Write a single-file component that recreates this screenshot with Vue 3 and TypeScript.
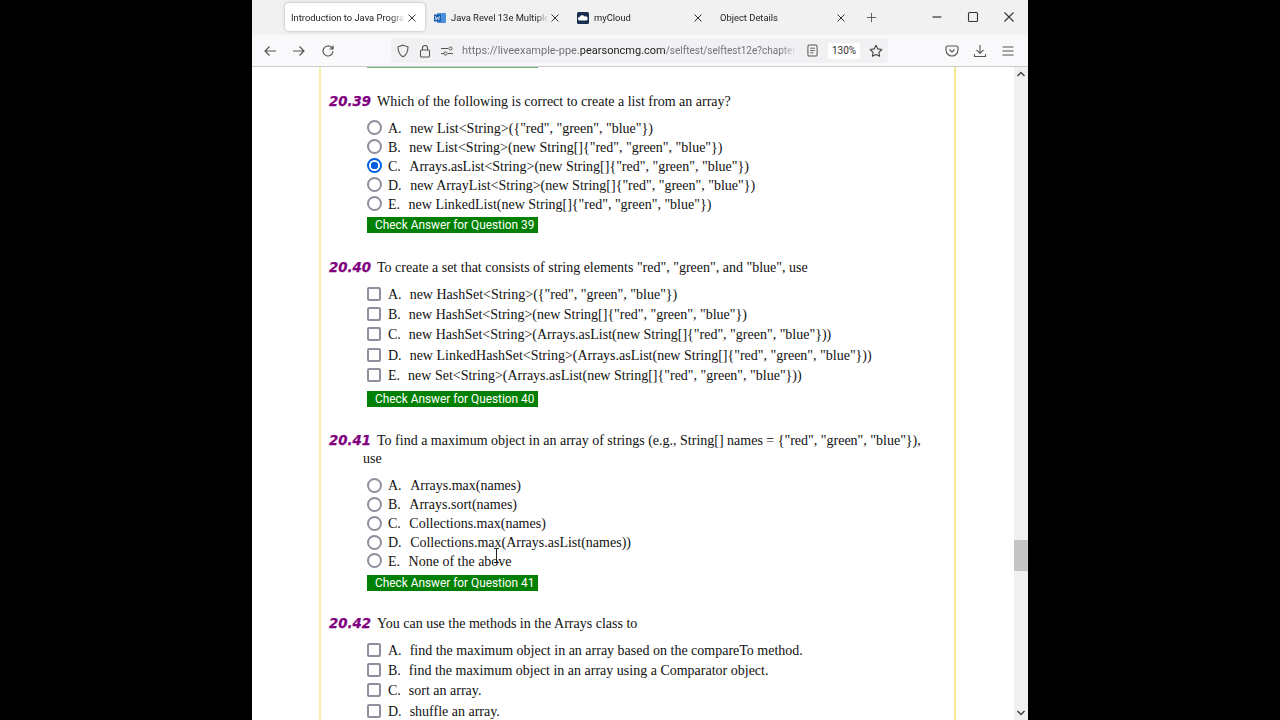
<script setup lang="ts">
interface Option {
  key: string
  text: string
  checked?: boolean
}

interface Question {
  num: string
  text: string
  type: 'radio' | 'check'
  options: Option[]
  button?: string
}

const tabs = [
  { title: 'Introduction to Java Programming', active: true, icon: '' },
  { title: 'Java Revel 13e Multiple Choice', active: false, icon: 'word' },
  { title: 'myCloud', active: false, icon: 'cloud' },
  { title: 'Object Details', active: false, icon: '' }
]

const questions: Question[] = [
  {
    num: '20.39',
    text: 'Which of the following is correct to create a list from an array?',
    type: 'radio',
    button: 'Check Answer for Question 39',
    options: [
      { key: 'A.', text: 'new List<String>({"red", "green", "blue"})' },
      { key: 'B.', text: 'new List<String>(new String[]{"red", "green", "blue"})' },
      { key: 'C.', text: 'Arrays.asList<String>(new String[]{"red", "green", "blue"})', checked: true },
      { key: 'D.', text: 'new ArrayList<String>(new String[]{"red", "green", "blue"})' },
      { key: 'E.', text: 'new LinkedList(new String[]{"red", "green", "blue"})' }
    ]
  },
  {
    num: '20.40',
    text: 'To create a set that consists of string elements "red", "green", and "blue", use',
    type: 'check',
    button: 'Check Answer for Question 40',
    options: [
      { key: 'A.', text: 'new HashSet<String>({"red", "green", "blue"})' },
      { key: 'B.', text: 'new HashSet<String>(new String[]{"red", "green", "blue"})' },
      { key: 'C.', text: 'new HashSet<String>(Arrays.asList(new String[]{"red", "green", "blue"}))' },
      { key: 'D.', text: 'new LinkedHashSet<String>(Arrays.asList(new String[]{"red", "green", "blue"}))' },
      { key: 'E.', text: 'new Set<String>(Arrays.asList(new String[]{"red", "green", "blue"}))' }
    ]
  },
  {
    num: '20.41',
    text: 'To find a maximum object in an array of strings (e.g., String[] names = {"red", "green", "blue"}), use',
    type: 'radio',
    button: 'Check Answer for Question 41',
    options: [
      { key: 'A.', text: 'Arrays.max(names)' },
      { key: 'B.', text: 'Arrays.sort(names)' },
      { key: 'C.', text: 'Collections.max(names)' },
      { key: 'D.', text: 'Collections.max(Arrays.asList(names))' },
      { key: 'E.', text: 'None of the above' }
    ]
  },
  {
    num: '20.42',
    text: 'You can use the methods in the Arrays class to',
    type: 'check',
    options: [
      { key: 'A.', text: 'find the maximum object in an array based on the compareTo method.' },
      { key: 'B.', text: 'find the maximum object in an array using a Comparator object.' },
      { key: 'C.', text: 'sort an array.' },
      { key: 'D.', text: 'shuffle an array.' }
    ]
  }
]
</script>

<template>
  <div class="screen">
    <div class="window">
      <div class="tabstrip">
        <div v-for="tab in tabs" :key="tab.title" :class="['tab', { 'tab--active': tab.active }]">
          <svg v-if="tab.icon === 'word'" class="tab__icon" viewBox="0 0 12 12">
            <rect x="3" y="1" width="9" height="10" rx="1" fill="#4a8fdc" />
            <rect x="0" y="2.5" width="7" height="7" fill="#1c5cb0" />
            <path d="M1.2 4l.8 4 1.3-3 1.3 3 .8-4" fill="none" stroke="#fff" stroke-width=".7" />
          </svg>
          <svg v-if="tab.icon === 'cloud'" class="tab__icon" viewBox="0 0 12 12">
            <rect width="12" height="12" rx="1.5" fill="#17304f" />
            <path d="M2.5 8.5a1.7 1.7 0 0 1 .2-3.4 2.6 2.6 0 0 1 4.8-.6 2.1 2.1 0 0 1 2 4z" fill="#fff" />
          </svg>
          <span class="tab__title">{{ tab.title }}</span>
          <svg class="tab__close" viewBox="0 0 10 10">
            <path d="M1.5 1.5l7 7M8.5 1.5l-7 7" stroke="#333" stroke-width="1" fill="none" />
          </svg>
        </div>
        <svg class="tabstrip__plus" viewBox="0 0 12 12">
          <path d="M6 1v10M1 6h10" stroke="#555" stroke-width="1" fill="none" />
        </svg>
        <div class="winctl">
          <svg viewBox="0 0 12 12"><path d="M1.5 6h9" stroke="#333" stroke-width="1.2" fill="none" /></svg>
          <svg viewBox="0 0 12 12"><rect x="1.5" y="1.5" width="9" height="9" rx="1" stroke="#333" stroke-width="1.1" fill="none" /></svg>
          <svg viewBox="0 0 12 12"><path d="M1.5 1.5l9 9M10.5 1.5l-9 9" stroke="#333" stroke-width="1.1" fill="none" /></svg>
        </div>
      </div>

      <div class="toolbar">
        <div class="nav">
          <svg viewBox="0 0 14 14"><path d="M13 7H2M6.5 2.5L2 7l4.5 4.5" stroke="#555" stroke-width="1.2" fill="none" /></svg>
          <svg viewBox="0 0 14 14"><path d="M1 7h11M7.5 2.5L12 7l-4.5 4.500" stroke="#555" stroke-width="1.2" fill="none" /></svg>
          <svg viewBox="0 0 14 14"><path d="M12 7.2A5 5 0 1 1 10.4 3.3L12 5M12 1.5V5H8.5" stroke="#555" stroke-width="1.2" fill="none" /></svg>
        </div>
        <div class="urlbar">
          <svg class="urlbar__icon" viewBox="0 0 14 14"><path d="M7 1.2l5 1.6c0 5-1.4 8.2-5 10-3.6-1.8-5-5-5-10z" stroke="#555" stroke-width="1.1" fill="none" /></svg>
          <svg class="urlbar__icon" viewBox="0 0 14 14"><rect x="2.5" y="6" width="9" height="7" rx="1" stroke="#555" stroke-width="1.1" fill="none" /><path d="M4.5 6V4a2.5 2.5 0 0 1 5 0v2" stroke="#555" stroke-width="1.1" fill="none" /></svg>
          <svg class="urlbar__icon" viewBox="0 0 14 14"><path d="M1 4.5h7M1 9.5h3M8 9.5h5" stroke="#555" stroke-width="1" fill="none" /><circle cx="10.5" cy="4.5" r="1.6" stroke="#555" fill="none" /><circle cx="5.5" cy="9.5" r="1.6" stroke="#555" fill="none" /></svg>
          <span class="url">https://liveexample-ppe.<b>pearsoncmg.com</b><span class="url__path">/selftest/selftest12e?chapter</span></span>
          <svg class="urlbar__reader" viewBox="0 0 12 14"><rect x="1" y="1" width="10" height="12" rx="1.5" stroke="#555" stroke-width="1.1" fill="none" /><path d="M3.5 4.5h5M3.5 7h5M3.5 9.5h3.5" stroke="#555" fill="none" /></svg>
          <span class="urlbar__zoom">130%</span>
          <svg class="urlbar__star" viewBox="0 0 14 14"><path d="M7 1.2l1.8 3.7 4 .6-2.9 2.8.7 4L7 10.4l-3.6 1.9.7-4-2.9-2.8 4-.6z" stroke="#444" stroke-width="1.1" fill="none" stroke-linejoin="round" /></svg>
        </div>
        <div class="tools">
          <svg viewBox="0 0 14 14"><path d="M2.5 2h9A1.5 1.5 0 0 1 13 3.500V6a6 6 0 0 1-12 0V3.500A1.500 1.500 0 0 1 2.500 2z" stroke="#555" stroke-width="1.1" fill="none" /><path d="M4.500 5.500L7 8l2.500-2.500" stroke="#555" stroke-width="1.1" fill="none" /></svg>
          <svg viewBox="0 0 14 14"><path d="M7 1v8M3.500 5.800L7 9.300l3.500-3.500M1.500 10v2.500h11V10" stroke="#555" stroke-width="1.1" fill="none" /></svg>
          <svg viewBox="0 0 14 14"><path d="M1.500 3h11M1.500 7h11M1.500 11h11" stroke="#555" stroke-width="1.1" fill="none" /></svg>
        </div>
      </div>

      <div class="viewport">
        <div class="page">
          <div class="panel">
            <div class="prev-button"></div>
            <section v-for="q in questions" :key="q.num" class="question">
              <p class="question__head"><span class="question__num">{{ q.num }}</span>{{ q.text }}</p>
              <ul :class="['options', `options--${q.type}`]">
                <li v-for="opt in q.options" :key="opt.key" class="option">
                  <span v-if="q.type === 'radio'" :class="['radio', { 'radio--on': opt.checked }]"></span>
                  <span v-else class="checkbox"></span>
                  <span class="option__key">{{ opt.key }}</span>
                  <span class="option__text">{{ opt.text }}</span>
                </li>
              </ul>
              <div v-if="q.button" class="check-btn">{{ q.button }}</div>
            </section>
          </div>
          <svg class="ibeam" viewBox="0 0 7 15">
            <path d="M1 .5h5M3.500.5v14M1 14.500h5" stroke="#222" stroke-width="1" fill="none" />
          </svg>
        </div>
        <div class="scrollbar">
          <svg class="scrollbar__arrow" viewBox="0 0 10 6"><path d="M1.500 5L5 1.500 8.500 5" stroke="#444" stroke-width="1.500" fill="none" /></svg>
          <div class="scrollbar__track"><div class="scrollbar__thumb"></div></div>
          <svg class="scrollbar__arrow" viewBox="0 0 10 6"><path d="M1.500 1L5 4.500 8.500 1" stroke="#444" stroke-width="1.500" fill="none" /></svg>
        </div>
      </div>
    </div>
  </div>
</template>

<style>
html,
body {
  margin: 0;
  background: #000;
}
</style>

<style scoped>
.screen {
  width: 1280px;
  height: 720px;
  background: #000;
  display: flex;
  justify-content: center;
  overflow: hidden;
}

.window {
  width: 776px;
  height: 720px;
  background: #fff;
  display: flex;
  flex-direction: column;
  font-family: Roboto, sans-serif;
}

/* tabs */
.tabstrip {
  height: 35px;
  flex-shrink: 0;
  background: #f1f1f2;
  display: flex;
  align-items: flex-start;
  padding: 3px 0 0 33px;
  box-sizing: border-box;
  gap: 3px;
}

.tab {
  width: 140px;
  height: 28px;
  display: flex;
  align-items: center;
  padding: 1px 8px 0 6px;
  box-sizing: border-box;
  border-radius: 4px;
  font-size: 9.400px;
  color: #222;
}

.tab--active {
  background: #fff;
  box-shadow: 0 0 3px rgba(0, 0, 0, 0.3);
}

.tab__icon {
  width: 12px;
  height: 12px;
  margin-right: 5px;
  flex-shrink: 0;
}

.tab__title {
  flex: 1;
  white-space: nowrap;
  overflow: hidden;
  -webkit-mask-image: linear-gradient(to right, #000 88%, transparent 100%);
  mask-image: linear-gradient(to right, #000 88%, transparent 100%);
}

.tab__close {
  width: 10px;
  height: 10px;
  margin-left: 2px;
  flex-shrink: 0;
}

.tabstrip__plus {
  width: 11px;
  height: 11px;
  margin: 9px 0 0 9px;
}

.winctl {
  margin-left: auto;
  display: flex;
  gap: 24px;
  padding: 8px 13px 0 0;
}

.winctl svg {
  width: 12px;
  height: 12px;
}

/* toolbar */
.toolbar {
  height: 32px;
  flex-shrink: 0;
  background: #f9f9fb;
  border-bottom: 1px solid #ccc;
  display: flex;
  align-items: center;
  box-sizing: border-box;
  padding-left: 11px;
}

.nav {
  display: flex;
  gap: 15px;
  width: 128px;
}

.nav svg {
  width: 14px;
  height: 14px;
}

.urlbar {
  width: 497px;
  height: 25px;
  background: #f1f1f4;
  border-radius: 4px;
  display: flex;
  align-items: center;
  padding-left: 5px;
  box-sizing: border-box;
  font-size: 11px;
}

.urlbar__icon {
  width: 14px;
  height: 14px;
  margin-right: 8px;
  flex-shrink: 0;
}

.url {
  width: 335px;
  white-space: nowrap;
  overflow: hidden;
  color: #73737a;
  -webkit-mask-image: linear-gradient(to right, #000 95%, transparent 100%);
  mask-image: linear-gradient(to right, #000 95%, transparent 100%);
}

.url b {
  font-weight: 400;
  color: #222;
}

.url__path {
  font-size: 10px;
}

.urlbar__reader {
  width: 11px;
  height: 13px;
  margin-left: 10px;
  flex-shrink: 0;
}

.urlbar__zoom {
  width: 32px;
  height: 16px;
  line-height: 16px;
  margin-left: 10px;
  background: #fff;
  border-radius: 2px;
  text-align: center;
  font-size: 10px;
  color: #333;
}

.urlbar__star {
  width: 14px;
  height: 14px;
  margin-left: 9px;
  flex-shrink: 0;
}

.tools {
  display: flex;
  gap: 14px;
  margin-left: 57px;
}

.tools svg {
  width: 14px;
  height: 14px;
}

/* page */
.viewport {
  flex: 1;
  min-height: 0;
  display: flex;
}

.page {
  flex: 1;
  position: relative;
  overflow: hidden;
}

.panel {
  width: 637px;
  height: 700px;
  margin-left: 67px;
  box-sizing: border-box;
  border-left: 2px solid #f5eeb0;
  border-right: 2px solid #f3e98f;
  padding: 0 24px 0 8px;
  font-family: "Liberation Serif", serif;
  font-size: 14px;
  color: #111;
}

.prev-button {
  width: 171px;
  height: 1px;
  margin-left: 38px;
  background: #70b870;
}

.question {
  margin-bottom: 25.500px;
}

.question:first-of-type {
  margin-top: 25px;
}

/* last block sits a touch closer in the source page */
.question:last-of-type {
  margin-top: -1.500px;
}

.question__head {
  margin: 0;
  line-height: 18px;
  padding-left: 34px;
  text-indent: -34px;
}

.question__num {
  display: inline-block;
  width: 48px;
  text-indent: 0;
  font-family: "DejaVu Sans", sans-serif;
  font-size: 13.3px;
  font-weight: 700;
  font-style: italic;
  color: #800080;
  -webkit-text-stroke: 0.25px #800080;
}

.options {
  list-style: none;
  margin: 7.500px 0 4.500px;
  padding: 0 0 0 38px;
}

.options--check {
  margin: 6.500px 0 5.500px;
}

.option {
  display: flex;
  align-items: center;
}

.options--radio .option {
  height: 18.900px;
}

.options--check .option {
  height: 20.400px;
}

.radio {
  width: 15px;
  height: 15px;
  border: 2px solid #8f8f9d;
  border-radius: 50%;
  box-sizing: border-box;
  margin-right: 6px;
  flex-shrink: 0;
}

.radio--on {
  border-color: #0060df;
  background: radial-gradient(circle, #0060df 0 3.500px, #fff 4px);
}

.checkbox {
  width: 14px;
  height: 14px;
  border: 2px solid #8f8f9d;
  border-radius: 2px;
  box-sizing: border-box;
  margin-right: 7px;
  flex-shrink: 0;
}

.option__key,
.option__text {
  padding-top: 2px;
}

.option__key {
  margin-right: 8.500px;
}

.options--check .option__key {
  margin-right: 8px;
}

.option__text {
  white-space: nowrap;
}

.check-btn {
  width: 171px;
  height: 16px;
  margin-left: 38px;
  background: #008000;
  color: #fff;
  font-family: Roboto, sans-serif;
  font-size: 11.850px;
  line-height: 16px;
  padding-left: 8px;
  box-sizing: border-box;
  white-space: nowrap;
}

.ibeam {
  position: absolute;
  left: 241px;
  top: 481px;
  width: 7px;
  height: 15px;
}

.scrollbar {
  width: 14px;
  flex-shrink: 0;
  background: #f0f0f0;
  display: flex;
  flex-direction: column;
  align-items: center;
}

.scrollbar__arrow {
  width: 10px;
  height: 6px;
  margin: 4px 0;
  flex-shrink: 0;
}

.scrollbar__track {
  flex: 1;
  width: 100%;
  padding-top: 459px;
  box-sizing: border-box;
}

.scrollbar__thumb {
  height: 31px;
  background: #c4c4c4;
}
</style>
